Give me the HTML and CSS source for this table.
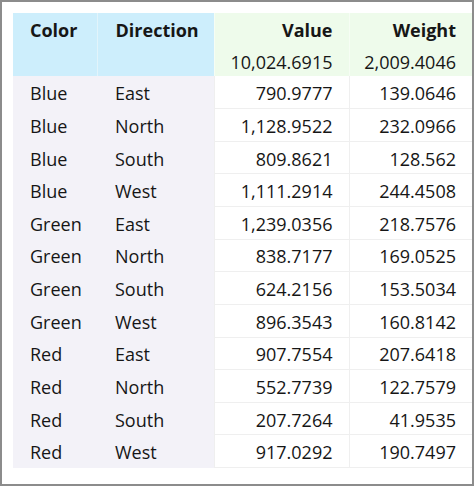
FILE: index.html
```html
<!DOCTYPE html>
<html>
<head>
<meta charset="utf-8">
<link rel="stylesheet" href="styles.css">
</head>
<body>
<div class="frame">
  <table class="grid">
    <colgroup>
      <col class="c-color"><col class="c-dir"><col class="c-val"><col class="c-wt">
    </colgroup>
    <thead>
      <tr class="hrow1">
        <th class="dim" rowspan="2">Color</th>
        <th class="dim" rowspan="2">Direction</th>
        <th class="meas">Value</th>
        <th class="meas">Weight</th>
      </tr>
      <tr class="hrow2">
        <td class="meas tot">10,024.6915</td>
        <td class="meas tot">2,009.4046</td>
      </tr>
    </thead>
    <tbody>
      <tr><td class="lab">Blue</td><td class="lab">East</td><td class="num">790.9777</td><td class="num">139.0646</td></tr>
      <tr><td class="lab">Blue</td><td class="lab">North</td><td class="num">1,128.9522</td><td class="num">232.0966</td></tr>
      <tr><td class="lab">Blue</td><td class="lab">South</td><td class="num">809.8621</td><td class="num">128.562</td></tr>
      <tr><td class="lab">Blue</td><td class="lab">West</td><td class="num">1,111.2914</td><td class="num">244.4508</td></tr>
      <tr><td class="lab">Green</td><td class="lab">East</td><td class="num">1,239.0356</td><td class="num">218.7576</td></tr>
      <tr><td class="lab">Green</td><td class="lab">North</td><td class="num">838.7177</td><td class="num">169.0525</td></tr>
      <tr><td class="lab">Green</td><td class="lab">South</td><td class="num">624.2156</td><td class="num">153.5034</td></tr>
      <tr><td class="lab">Green</td><td class="lab">West</td><td class="num">896.3543</td><td class="num">160.8142</td></tr>
      <tr><td class="lab">Red</td><td class="lab">East</td><td class="num">907.7554</td><td class="num">207.6418</td></tr>
      <tr><td class="lab">Red</td><td class="lab">North</td><td class="num">552.7739</td><td class="num">122.7579</td></tr>
      <tr><td class="lab">Red</td><td class="lab">South</td><td class="num">207.7264</td><td class="num">41.9535</td></tr>
      <tr><td class="lab">Red</td><td class="lab">West</td><td class="num">917.0292</td><td class="num">190.7497</td></tr>
    </tbody>
  </table>
</div>
</body>
</html>
```
FILE: styles.css
```css
html, body {
  margin: 0;
  padding: 0;
  background: #ffffff;
}
body {
  width: 474px;
  height: 486px;
  font-family: "Open Sans", "Noto Sans", sans-serif;
  color: #161616;
}
.frame {
  box-sizing: border-box;
  width: 474px;
  height: 486px;
  border: 2px solid #8c8c8c;
  padding: 11px 0 0 11px;
  overflow: hidden;
}
.grid {
  border-collapse: collapse;
  table-layout: fixed;
  width: 459px;
  font-size: 18px;
}
.c-color { width: 84px; }
.c-dir { width: 117px; }
.c-val { width: 135px; }
.c-wt { width: 123px; }
.grid th, .grid td {
  padding: 0;
  white-space: nowrap;
}
.hrow1 { height: 33px; }
.hrow2 { height: 30px; }
.dim {
  background: #cdeefc;
  text-align: left;
  vertical-align: top;
  padding: 5px 0 0 17px !important;
  font-weight: 700;
  border-right: 1px solid #e2f4fb;
}
.grid th.dim + th.dim { padding-left: 18px !important; border-right: none; }
th.meas {
  background: #eefbeb;
  text-align: right;
  font-weight: 700;
  padding: 5px 16px 0 0 !important;
  vertical-align: top;
  border-left: 1px solid #f6fdf4;
}
td.tot {
  background: #eefbeb;
  text-align: right;
  padding: 1px 16px 0 0 !important;
  border-left: 1px solid #f6fdf4;
}
tbody tr { height: 32.64px; }
.lab {
  background: #f3f2f8;
  padding: 2px 0 0 17px !important;
}
.lab + .lab { padding-left: 18px !important; }
.num {
  text-align: right;
  padding: 2px 16px 0 0 !important;
  border-bottom: 1px solid #efefef;
  border-left: 1px solid #efefef;
}
```
